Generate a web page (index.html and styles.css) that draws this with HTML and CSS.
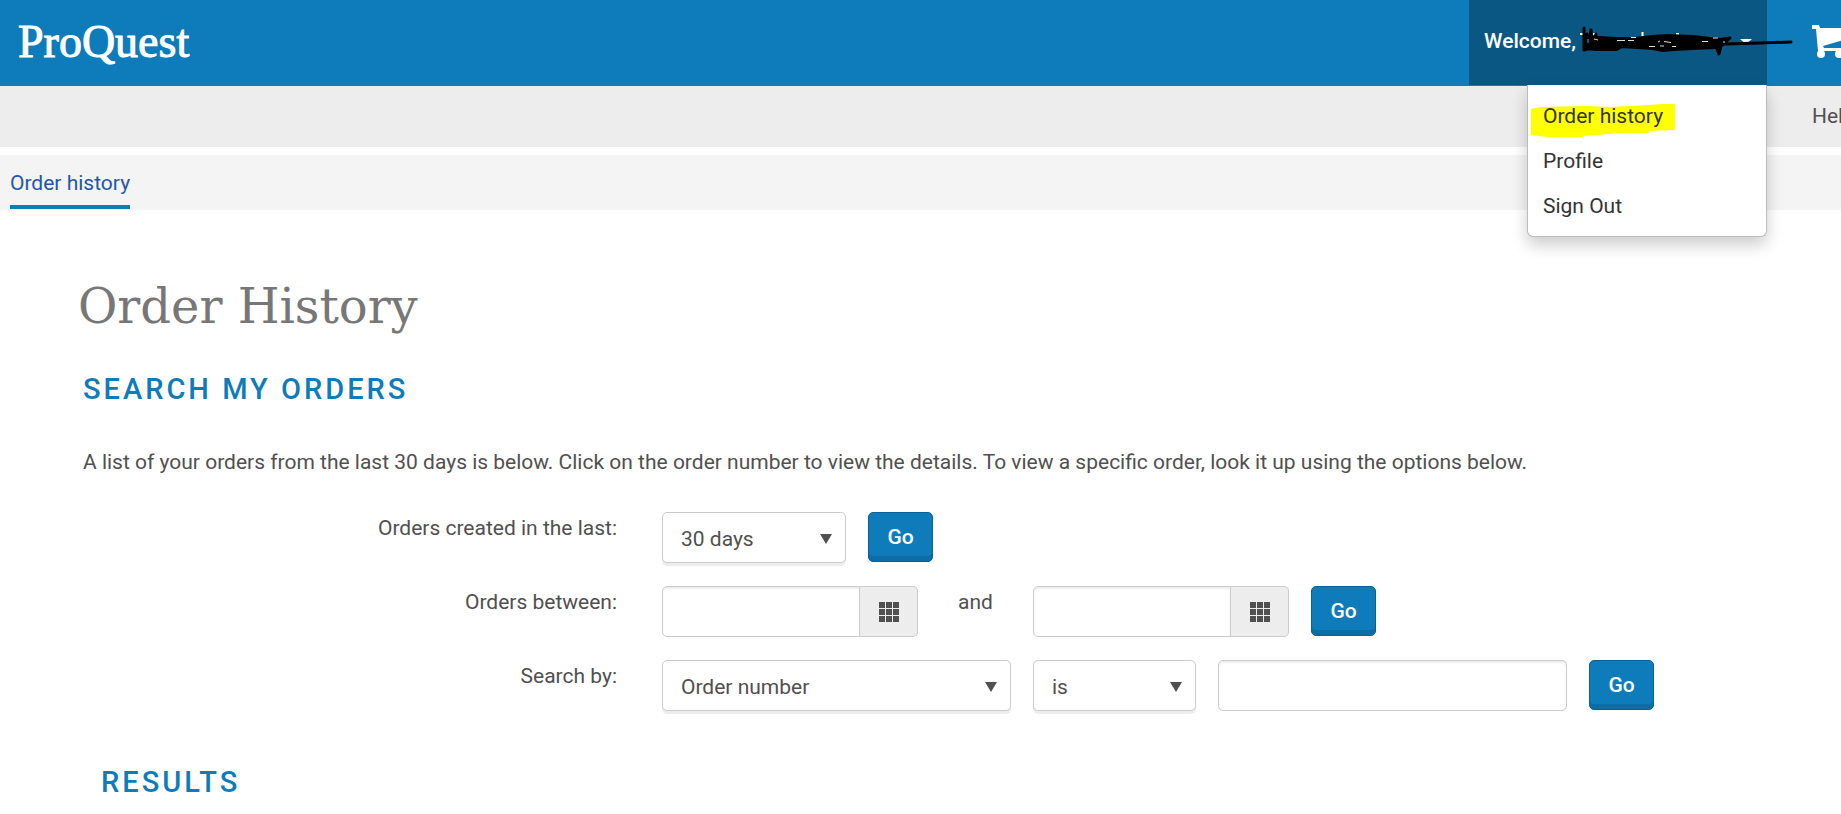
FILE: index.html
```html
<!DOCTYPE html>
<html lang="en">
<head>
	<meta charset="UTF-8">
	<meta name="viewport" content="width=device-width, initial-scale=1.0">
	<title>ProQuest - Order History</title>
	<link rel="stylesheet" href="styles.css">
</head>
<body>
	<header class="header">
		<a class="logo" href="#">ProQuest</a>
		<div class="user">
			<button class="user_btn" type="button" aria-expanded="true">
				<span>Welcome,</span>
				<span class="caret"></span>
			</button>
			<!-- name crossed out -->
			<svg class="scribble" width="216" height="34" viewBox="0 0 216 34" aria-hidden="true">
				<path d="M0 9h4M13 9h4M62.500 7v5M96 9h3" stroke="#fff" stroke-width="2"/>
				<path d="M5 11L20 12L35 13L55 13L72 11L87 10L113 11L130 13L142 14L148 13L146 17L143 20L136 23L113 24L94 25L83 26L72 24L42 22L37 25L17 25L5 24Z" stroke="#000" stroke-width="2" stroke-linejoin="round"/>
				<path d="M4 3v22l3-16 1 15 3-19 1 18 4-14M5 25l16-9" fill="none" stroke="#000" stroke-width="3" stroke-linecap="round" stroke-linejoin="round"/>
				<path d="M138 15l12-2-9 8-2 8-3-8M145 19l35-1 31-1" fill="none" stroke="#000" stroke-width="3" stroke-linecap="round" stroke-linejoin="round"/>
				<path d="M14 14l4 1M37 15.500h8M48 15.500h6M51 12.500h5M69 21.500h6M78 17l2-1M80 21h4M84 16.500l7 1M92 21.500h4M122 16.500h6M133 13h5M143 17h2" fill="none" stroke="#ddd"/>
				<path d="M8 18v-4" stroke="#0a5783" stroke-width="2"/>
			</svg>
			<ul class="menu">
				<li>
					<svg class="marker" width="144" height="34" viewBox="0 0 144 34" aria-hidden="true">
						<path d="M0 5L10 3L55 2L80 3L118 1L131 0H144V26L118 27V29H88L78 30L52 32V33H17L0 31Z" fill="#ff0"/>
					</svg>
					<a href="#">Order history</a>
				</li>
				<li><a href="#">Profile</a></li>
				<li><a href="#">Sign Out</a></li>
			</ul>
		</div>
		<a class="cart" href="#" aria-label="Cart">
			<svg width="42" height="34" viewBox="0 0 42 34" fill="#fff">
				<path d="M0 0H7L8 3H41L38 13L11 21L12 23H38V26H6L4 4H0Z"/>
				<circle cx="9" cy="29" r="4"/>
				<circle cx="27" cy="29" r="4"/>
			</svg>
		</a>
	</header>
	<div class="subbar"><a class="help" href="#">Help</a></div>
	<nav class="tabs"><a class="tab" href="#">Order history</a></nav>

	<main class="main">
		<h1 class="title">Order History</h1>
		<h2 class="subtitle">SEARCH MY ORDERS</h2>
		<p class="intro">A list of your orders from the last 30 days is below. Click on the order number to view the details. To view a specific order, look it up using the options below.</p>

		<!-- search forms -->
		<form class="row">
			<label class="label" for="days">Orders created in the last:</label>
			<div class="fields">
				<div class="select select_days">
					<select id="days"><option>30 days</option></select>
				</div>
				<button class="go" type="button">Go</button>
			</div>
		</form>
		<form class="row">
			<label class="label" for="from">Orders between:</label>
			<div class="fields">
				<div class="date">
					<input class="input" id="from" type="text">
					<button class="date_btn" type="button" aria-label="Choose start date">
						<svg width="20" height="20" viewBox="0 0 20 20"><path d="M0 0h6v6H0zM7 0h6v6H7zM14 0h6v6h-6zM0 7h6v6H0zM7 7h6v6H7zM14 7h6v6h-6zM0 14h6v6H0zM7 14h6v6H7zM14 14h6v6h-6z" fill="#505050"/></svg>
					</button>
				</div>
				<label class="and" for="to">and</label>
				<div class="date">
					<input class="input" id="to" type="text">
					<button class="date_btn" type="button" aria-label="Choose end date">
						<svg width="20" height="20" viewBox="0 0 20 20"><path d="M0 0h6v6H0zM7 0h6v6H7zM14 0h6v6h-6zM0 7h6v6H0zM7 7h6v6H7zM14 7h6v6h-6zM0 14h6v6H0zM7 14h6v6H7zM14 14h6v6h-6z" fill="#505050"/></svg>
					</button>
				</div>
				<button class="go" type="button">Go</button>
			</div>
		</form>
		<form class="row">
			<label class="label" for="field">Search by:</label>
			<div class="fields">
				<div class="select select_field">
					<select id="field"><option>Order number</option></select>
				</div>
				<div class="select select_op">
					<select aria-label="Condition"><option>is</option></select>
				</div>
				<input class="input search" type="text" aria-label="Search value">
				<button class="go" type="button">Go</button>
			</div>
		</form>

		<h2 class="subtitle results">RESULTS</h2>
	</main>
</body>
</html>
```
FILE: styles.css
```css
* {
	box-sizing: border-box;
	padding: 0;
	margin: 0;
}
body {
	font: 21px/24px Roboto, sans-serif;
	color: #505050;
	background-color: #fff;
}
a {
	color: inherit;
	text-decoration: none;
}
/* header */
.header {
	display: flex;
	height: 86px;
	background-color: #0e7cbb;
	color: #fff;
}
.logo {
	padding: 15px 18px;
	font: 46px/54px "Liberation Serif", serif;
	-webkit-text-stroke: 1px #fff;
}
.user {
	position: relative;
	width: 298px;
	height: 85px;
	margin-left: auto;
	background-color: #0a5783;
}
.user_btn {
	display: flex;
	align-items: center;
	justify-content: space-between;
	width: 100%;
	height: 82px;
	padding: 0 15px;
	border: 0;
	background: none;
	color: #fff;
	font: 500 21px/24px Roboto, sans-serif;
}
.caret {
	border: 6px solid transparent;
	border-top: 5px solid #fff;
	border-bottom: 0;
}
.scribble {
	position: absolute;
	top: 25px;
	left: 111px;
	z-index: 2;
}
.cart {
	width: 74px;
	padding: 25px 0 0 45px;
	overflow: hidden;
}
.cart svg {
	display: block;
}
/* user menu */
.menu {
	position: absolute;
	top: 85px;
	right: 0;
	z-index: 1;
	width: 240px;
	padding: 9px 0 7px;
	border: 1px solid #bbb;
	border-top: 0;
	border-radius: 0 0 6px 6px;
	background-color: #fff;
	box-shadow: 0 8px 16px rgba(0, 0, 0, .2);
	color: #333;
	list-style: none;
}
.menu li {
	position: relative;
	padding: 0 15px;
	line-height: 45px;
}
.menu a {
	position: relative;
}
.marker {
	position: absolute;
	top: 10px;
	left: 3px;
}
/* bars under the header */
.subbar {
	display: flex;
	justify-content: flex-end;
	height: 61px;
	background-color: #ededed;
	line-height: 60px;
}
.help {
	width: 74px;
	padding-left: 45px;
	overflow: hidden;
}
.tabs {
	display: flex;
	height: 55px;
	margin-top: 8px;
	padding: 0 10px;
	background-color: #f4f4f4;
}
.tab {
	height: 54px;
	border-bottom: 4px solid #0e7cbb;
	color: #2257a8;
	line-height: 56px;
}
/* content */
.main {
	padding: 64px 83px 0;
}
.title {
	margin-left: -5px;
	color: #777;
	font: 48px/64px "DejaVu Serif", serif;
}
.subtitle {
	margin-top: 33px;
	color: #0e7cbb;
	font-size: 29px;
	font-weight: 500;
	line-height: 36px;
	letter-spacing: 3px;
}
.intro {
	margin: 43px 0 38px;
}
.row {
	display: grid;
	grid-template-columns: minmax(0, 534px) 1fr;
	column-gap: 45px;
	margin-bottom: 23px;
}
.label {
	padding-top: 4px;
	text-align: right;
}
.fields {
	display: flex;
	column-gap: 22px;
}
.and {
	width: 71px;
	padding-top: 4px;
	text-align: center;
}
.select {
	position: relative;
	height: 51px;
}
.select select {
	appearance: none;
	width: 100%;
	height: 51px;
	padding: 2px 18px 0;
	border: 1px solid #ccc;
	border-radius: 5px;
	background-color: #fff;
	box-shadow: 0 3px 0 #ededed;
	color: #505050;
	font: 21px/24px Roboto, sans-serif;
}
.select::after {
	content: "";
	position: absolute;
	top: 22px;
	right: 14px;
	border: 6px solid transparent;
	border-top: 10px solid #505050;
	border-bottom: 0;
	pointer-events: none;
}
.select_days {
	width: 184px;
}
.select_field {
	width: 349px;
}
.select_op {
	width: 163px;
}
.input {
	height: 51px;
	padding: 0 18px;
	border: 1px solid #ccc;
	border-radius: 5px;
	box-shadow: inset 0 2px 2px rgba(0, 0, 0, .07);
	color: #505050;
	font: 21px/24px Roboto, sans-serif;
}
.search {
	width: 349px;
}
.date {
	display: flex;
	width: 256px;
}
.date .input {
	flex: 1;
	min-width: 0;
	border-radius: 5px 0 0 5px;
}
.date_btn {
	display: flex;
	align-items: center;
	justify-content: center;
	width: 58px;
	border: 1px solid #ccc;
	border-left: 0;
	border-radius: 0 5px 5px 0;
	background-color: #ededed;
}
.go {
	width: 65px;
	height: 50px;
	border: 1px solid #0a6197;
	border-radius: 5px;
	background-color: #0e7cbb;
	box-shadow: inset 0 -5px 0 #0c6ca5;
	color: #fff;
	font: 500 21px/24px Roboto, sans-serif;
}
.results {
	margin: 53px 0 0 18px;
}
```
